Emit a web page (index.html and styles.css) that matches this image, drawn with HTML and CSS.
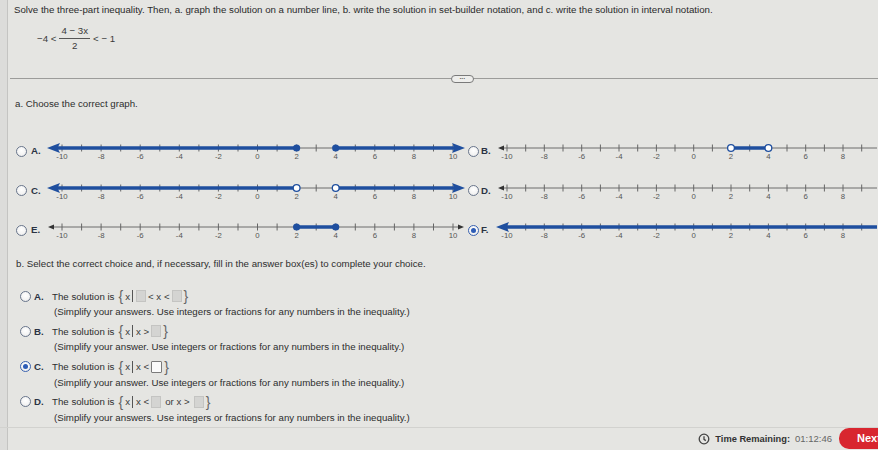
FILE: index.html
```html
<!DOCTYPE html>
<html>
<head>
<meta charset="utf-8">
<link rel="stylesheet" href="styles.css">
</head>
<body>
<div class="page">
  <p class="title">Solve the three-part inequality. Then, a. graph the solution on a number line, b. write the solution in set-builder notation, and c. write the solution in interval notation.</p>
  <div class="ineq">
    <span class="ineq-part">−4 &lt;</span>
    <span class="frac"><span class="num">4 − 3x</span><span class="den">2</span></span>
    <span class="ineq-part">&lt; − 1</span>
  </div>
  <div class="rule"><span class="more">•••</span></div>
  <p class="part">a. Choose the correct graph.</p>

  <div class="graphs">
    <!-- A -->
    <div class="opt">
      <span class="radio"></span><span class="opt-label">A.</span>
      <svg class="nl nl-left" width="420" height="26" viewBox="0 0 420 26">
        <line class="axis" x1="4" y1="8" x2="413" y2="8"/>
        <path class="ticks" d="M15 4.5v7M34.6 4.5v7M54.1 4.5v7M73.7 4.5v7M93.2 4.5v7M112.8 4.5v7M132.3 4.5v7M151.9 4.5v7M171.4 4.5v7M191 4.5v7M210.5 4.5v7M230.1 4.5v7M249.6 4.5v7M269.2 4.5v7M288.7 4.5v7M308.3 4.5v7M327.8 4.5v7M347.4 4.5v7M366.9 4.5v7M386.5 4.5v7M406 4.5v7"/>
        <line class="shade" x1="8" y1="8" x2="249.6" y2="8"/>
        <line class="shade" x1="288.7" y1="8" x2="410" y2="8"/>
        <polygon class="barrow" points="0,8 13,3 10.5,8 13,13"/>
        <polygon class="barrow" points="418,8 405,3 407.5,8 405,13"/>
        <circle class="dot" cx="249.6" cy="8" r="3.6"/>
        <circle class="dot" cx="288.7" cy="8" r="3.6"/>
        <g class="lbl"><text x="15" y="19">-10</text><text x="54.1" y="19">-8</text><text x="93.2" y="19">-6</text><text x="132.3" y="19">-4</text><text x="171.4" y="19">-2</text><text x="210.5" y="19">0</text><text x="249.6" y="19">2</text><text x="288.7" y="19">4</text><text x="327.8" y="19">6</text><text x="366.9" y="19">8</text><text x="406" y="19">10</text></g>
      </svg>
    </div>
    <!-- B -->
    <div class="opt opt-right">
      <span class="radio"></span><span class="opt-label">B.</span>
      <svg class="nl" width="382" height="26" viewBox="0 0 382 26">
        <line class="axis" x1="6" y1="8" x2="382" y2="8"/>
        <polygon class="arrow" points="3,8 9,5.5 9,10.5"/>
        <path class="ticks" d="M12 4.5v7M30.7 4.5v7M49.3 4.5v7M68 4.5v7M86.7 4.5v7M105.4 4.5v7M124 4.5v7M142.7 4.5v7M161.4 4.5v7M180 4.5v7M198.7 4.5v7M217.4 4.5v7M236 4.5v7M254.7 4.5v7M273.4 4.5v7M292 4.5v7M310.7 4.5v7M329.4 4.5v7M348 4.5v7M366.7 4.5v7"/>
        <line class="shade" x1="236" y1="8" x2="273.4" y2="8"/>
        <circle class="odot" cx="236" cy="8" r="3.4"/>
        <circle class="odot" cx="273.4" cy="8" r="3.4"/>
        <g class="lbl"><text x="12" y="19">-10</text><text x="49.3" y="19">-8</text><text x="86.7" y="19">-6</text><text x="124" y="19">-4</text><text x="161.4" y="19">-2</text><text x="198.7" y="19">0</text><text x="236" y="19">2</text><text x="273.4" y="19">4</text><text x="310.7" y="19">6</text><text x="348" y="19">8</text></g>
      </svg>
    </div>
    <!-- C -->
    <div class="opt">
      <span class="radio"></span><span class="opt-label">C.</span>
      <svg class="nl nl-left" width="420" height="26" viewBox="0 0 420 26">
        <line class="axis" x1="4" y1="8" x2="413" y2="8"/>
        <path class="ticks" d="M15 4.5v7M34.6 4.5v7M54.1 4.5v7M73.7 4.5v7M93.2 4.5v7M112.8 4.5v7M132.3 4.5v7M151.9 4.5v7M171.4 4.5v7M191 4.5v7M210.5 4.5v7M230.1 4.5v7M249.6 4.5v7M269.2 4.5v7M288.7 4.5v7M308.3 4.5v7M327.8 4.5v7M347.4 4.5v7M366.9 4.5v7M386.5 4.5v7M406 4.5v7"/>
        <line class="shade" x1="8" y1="8" x2="246" y2="8"/>
        <line class="shade" x1="292" y1="8" x2="410" y2="8"/>
        <polygon class="barrow" points="0,8 13,3 10.5,8 13,13"/>
        <polygon class="barrow" points="418,8 405,3 407.5,8 405,13"/>
        <circle class="odot" cx="249.6" cy="8" r="3.4"/>
        <circle class="odot" cx="288.7" cy="8" r="3.4"/>
        <g class="lbl"><text x="15" y="19">-10</text><text x="54.1" y="19">-8</text><text x="93.2" y="19">-6</text><text x="132.3" y="19">-4</text><text x="171.4" y="19">-2</text><text x="210.5" y="19">0</text><text x="249.6" y="19">2</text><text x="288.7" y="19">4</text><text x="327.8" y="19">6</text><text x="366.9" y="19">8</text><text x="406" y="19">10</text></g>
      </svg>
    </div>
    <!-- D -->
    <div class="opt opt-right">
      <span class="radio"></span><span class="opt-label">D.</span>
      <svg class="nl" width="382" height="26" viewBox="0 0 382 26">
        <line class="axis" x1="6" y1="8" x2="382" y2="8"/>
        <polygon class="arrow" points="3,8 9,5.5 9,10.5"/>
        <path class="ticks" d="M12 4.5v7M30.7 4.5v7M49.3 4.5v7M68 4.5v7M86.7 4.5v7M105.4 4.5v7M124 4.5v7M142.7 4.5v7M161.4 4.5v7M180 4.5v7M198.7 4.5v7M217.4 4.5v7M236 4.5v7M254.7 4.5v7M273.4 4.5v7M292 4.5v7M310.7 4.5v7M329.4 4.5v7M348 4.5v7M366.7 4.5v7"/>
        <g class="lbl"><text x="12" y="19">-10</text><text x="49.3" y="19">-8</text><text x="86.7" y="19">-6</text><text x="124" y="19">-4</text><text x="161.4" y="19">-2</text><text x="198.7" y="19">0</text><text x="236" y="19">2</text><text x="273.4" y="19">4</text><text x="310.7" y="19">6</text><text x="348" y="19">8</text></g>
      </svg>
    </div>
    <!-- E -->
    <div class="opt">
      <span class="radio"></span><span class="opt-label">E.</span>
      <svg class="nl nl-left" width="420" height="26" viewBox="0 0 420 26">
        <line class="axis" x1="4" y1="8" x2="413" y2="8"/>
        <polygon class="arrow" points="1,8 7,5.5 7,10.5"/>
        <polygon class="arrow" points="417,8 411,5.5 411,10.5"/>
        <path class="ticks" d="M15 4.5v7M34.6 4.5v7M54.1 4.5v7M73.7 4.5v7M93.2 4.5v7M112.8 4.5v7M132.3 4.5v7M151.9 4.5v7M171.4 4.5v7M191 4.5v7M210.5 4.5v7M230.1 4.5v7M249.6 4.5v7M269.2 4.5v7M288.7 4.5v7M308.3 4.5v7M327.8 4.5v7M347.4 4.5v7M366.9 4.5v7M386.5 4.5v7M406 4.5v7"/>
        <line class="shade" x1="249.6" y1="8" x2="288.7" y2="8"/>
        <circle class="dot" cx="249.6" cy="8" r="3.6"/>
        <circle class="dot" cx="288.7" cy="8" r="3.6"/>
        <g class="lbl"><text x="15" y="19">-10</text><text x="54.1" y="19">-8</text><text x="93.2" y="19">-6</text><text x="132.3" y="19">-4</text><text x="171.4" y="19">-2</text><text x="210.5" y="19">0</text><text x="249.6" y="19">2</text><text x="288.7" y="19">4</text><text x="327.8" y="19">6</text><text x="366.9" y="19">8</text><text x="406" y="19">10</text></g>
      </svg>
    </div>
    <!-- F -->
    <div class="opt opt-right">
      <span class="radio radio-on"></span><span class="opt-label">F.</span>
      <svg class="nl" width="382" height="26" viewBox="0 0 382 26">
        <path class="ticks" d="M12 4.5v7M30.7 4.5v7M49.3 4.5v7M68 4.5v7M86.7 4.5v7M105.4 4.5v7M124 4.5v7M142.7 4.5v7M161.4 4.5v7M180 4.5v7M198.7 4.5v7M217.4 4.5v7M236 4.5v7M254.7 4.5v7M273.4 4.5v7M292 4.5v7M310.7 4.5v7M329.4 4.5v7M348 4.5v7M366.7 4.5v7"/>
        <line class="shade" x1="10" y1="8" x2="382" y2="8"/>
        <polygon class="barrow" points="1,8 14,3 11.5,8 14,13"/>
        <g class="lbl"><text x="12" y="19">-10</text><text x="49.3" y="19">-8</text><text x="86.7" y="19">-6</text><text x="124" y="19">-4</text><text x="161.4" y="19">-2</text><text x="198.7" y="19">0</text><text x="236" y="19">2</text><text x="273.4" y="19">4</text><text x="310.7" y="19">6</text><text x="348" y="19">8</text></g>
      </svg>
    </div>
  </div>

  <p class="part part-b">b. Select the correct choice and, if necessary, fill in the answer box(es) to complete your choice.</p>

  <div class="choices">
    <div class="choice">
      <div class="choice-main">
        <span class="radio"></span><span class="ch-label">A.</span><span class="stmt">The solution is</span>
        <span class="set"><span class="brace">{</span><span class="sv">x</span><span class="bar"></span><span class="box"></span><span class="sv">&lt; x &lt;</span><span class="box"></span><span class="brace">}</span></span>
      </div>
      <div class="note">(Simplify your answers. Use integers or fractions for any numbers in the inequality.)</div>
    </div>
    <div class="choice">
      <div class="choice-main">
        <span class="radio"></span><span class="ch-label">B.</span><span class="stmt">The solution is</span>
        <span class="set"><span class="brace">{</span><span class="sv">x</span><span class="bar"></span><span class="sv">x &gt;</span><span class="box"></span><span class="brace">}</span></span>
      </div>
      <div class="note">(Simplify your answer. Use integers or fractions for any numbers in the inequality.)</div>
    </div>
    <div class="choice">
      <div class="choice-main">
        <span class="radio radio-on"></span><span class="ch-label">C.</span><span class="stmt">The solution is</span>
        <span class="set"><span class="brace">{</span><span class="sv">x</span><span class="bar"></span><span class="sv">x &lt;</span><span class="box box-empty"></span><span class="brace">}</span></span>
      </div>
      <div class="note">(Simplify your answer. Use integers or fractions for any numbers in the inequality.)</div>
    </div>
    <div class="choice">
      <div class="choice-main">
        <span class="radio"></span><span class="ch-label">D.</span><span class="stmt">The solution is</span>
        <span class="set"><span class="brace">{</span><span class="sv">x</span><span class="bar"></span><span class="sv">x &lt;</span><span class="box"></span><span class="sv sv-or">or x &gt;</span><span class="box"></span><span class="brace">}</span></span>
      </div>
      <div class="note">(Simplify your answers. Use integers or fractions for any numbers in the inequality.)</div>
    </div>
  </div>

  <div class="footer">
    <svg class="clock" width="12" height="12" viewBox="0 0 12 12"><circle cx="6" cy="6" r="4.8"/><path d="M6 3.2V6.3L7.8 7.6"/></svg>
    <span class="time-label">Time Remaining:</span>
    <span class="time-value">01:12:46</span>
    <span class="next">Next</span>
  </div>
</div>
</body>
</html>
```

FILE: styles.css
```css
html, body {
  margin: 0;
  padding: 0;
}
body {
  width: 878px;
  height: 450px;
  overflow: hidden;
  background: linear-gradient(to right, #dcdcda 0, #dcdcda 7px, #c4c4c2 7px, #c4c4c2 8px, #e5e5e2 8px);
  font-family: "Liberation Sans", Arial, sans-serif;
  font-size: 9.7px;
  color: #2d2d2d;
}
.page {
  width: 878px;
  height: 450px;
  overflow: hidden;
  display: flex;
  flex-direction: column;
}
.title {
  margin: 0;
  padding: 3px 0 0 14px;
  line-height: 14px;
  white-space: nowrap;
  color: #2a2a2a;
}
.ineq {
  margin: 7px 0 0 37px;
  display: flex;
  align-items: center;
  gap: 3px;
  font-size: 9.7px;
  color: #3a3a3a;
  height: 28px;
}
.frac {
  display: inline-flex;
  flex-direction: column;
  align-items: center;
}
.num {
  line-height: 13px;
  padding: 0 2px 1px;
  border-bottom: 1px solid #555;
}
.den {
  line-height: 13px;
}
.rule {
  position: relative;
  margin: 26px 0 0 10px;
  height: 1px;
  background: #9c9c9a;
}
.more {
  position: absolute;
  left: 441px;
  top: -3px;
  width: 21px;
  height: 6px;
  border: 1px solid #7a7a7a;
  border-radius: 4px;
  background: #eeeeec;
  font-size: 4px;
  line-height: 6px;
  text-align: center;
  color: #444;
  letter-spacing: 0.5px;
}
.part {
  margin: 18px 0 0 15px;
  line-height: 14px;
  white-space: nowrap;
}
.graphs {
  margin-top: 29px;
  padding-left: 16px;
  display: grid;
  grid-template-columns: 452px 410px;
  row-gap: 13.5px;
}
.opt {
  display: flex;
  align-items: flex-start;
  height: 26px;
}
.opt .radio {
  margin-top: 5.5px;
  margin-right: 4px;
}
.opt-label {
  width: 12px;
  margin-right: 4px;
  margin-top: 5px;
  line-height: 12px;
  font-weight: bold;
  color: #2b3344;
}
.opt-right .radio {
  margin-right: 2px;
}
.opt-right .opt-label {
  margin-right: 2px;
}
.nl {
  display: block;
  flex: none;
}
.axis {
  stroke: #6d6d6d;
  stroke-width: 1;
}
.ticks {
  stroke: #666;
  stroke-width: 1;
  fill: none;
}
.arrow {
  fill: #333;
}
.shade {
  stroke: #1f4f9f;
  stroke-width: 3.4;
}
.barrow {
  fill: #1f4f9f;
}
.dot {
  fill: #1f4f9f;
}
.odot {
  fill: #ffffff;
  stroke: #1f4f9f;
  stroke-width: 1.3;
}
.lbl text {
  font-family: "Liberation Sans", Arial, sans-serif;
  font-size: 7.8px;
  fill: #555;
  text-anchor: middle;
}
.radio {
  flex: none;
  box-sizing: border-box;
  width: 11px;
  height: 11px;
  border-radius: 50%;
  border: 1px solid #69768c;
  background: radial-gradient(circle at 50% 40%, #ffffff 0, #f3f3f3 60%, #dcdcdc 100%);
  display: inline-flex;
  align-items: center;
  justify-content: center;
}
.radio-on {
  border-color: #3b63b0;
}
.radio-on::after {
  content: "";
  width: 5px;
  height: 5px;
  border-radius: 50%;
  background: #2d5cb6;
}
.part-b {
  margin-top: 12px;
  margin-left: 16px;
}
.choices {
  margin-top: 17px;
  padding-left: 20px;
  display: flex;
  flex-direction: column;
  gap: 3.3px;
}
.choice-main {
  display: flex;
  align-items: center;
  height: 16px;
}
.ch-label {
  width: 21px;
  padding-left: 3px;
  box-sizing: border-box;
  font-weight: bold;
  color: #2b3344;
}
.stmt {
  margin-right: 3px;
}
.set {
  display: inline-flex;
  align-items: center;
  color: #3a3a3a;
}
.brace {
  font-size: 14px;
  line-height: 16px;
  color: #666;
  margin: 0 1px;
}
.sv {
  margin: 0 1px;
}
.sv-or {
  margin: 0 3px;
}
.bar {
  width: 1px;
  height: 12px;
  background: #555;
  margin: 0 2px 0 1px;
}
.box {
  box-sizing: border-box;
  width: 10px;
  height: 12px;
  background: #d4d4d2;
  border: 1px solid #c4c4c2;
  margin: 0 1px;
}
.box-empty {
  width: 11px;
  background: #fbfbfb;
  border: 1px solid #7b7b7b;
  border-radius: 1px;
}
.note {
  margin-left: 34px;
  line-height: 16px;
  white-space: nowrap;
}
.footer {
  margin-top: 1px;
  height: 22px;
  border-top: 1px solid #d2d2cf;
  display: flex;
  align-items: center;
  justify-content: flex-end;
}
.clock {
  margin-right: 5px;
}
.clock circle, .clock path {
  fill: none;
  stroke: #444;
  stroke-width: 1.3;
}
.time-label {
  font-size: 9.3px;
  font-weight: bold;
  color: #333;
  margin-right: 5px;
}
.time-value {
  font-size: 9.5px;
  color: #666;
  margin-right: 7px;
}
.next {
  box-sizing: border-box;
  width: 39px;
  height: 21px;
  padding-left: 18px;
  background: #d8262f;
  border-radius: 10px 0 0 10px;
  color: #fff;
  font-weight: bold;
  font-size: 11px;
  line-height: 21px;
  white-space: nowrap;
  overflow: hidden;
}
```
